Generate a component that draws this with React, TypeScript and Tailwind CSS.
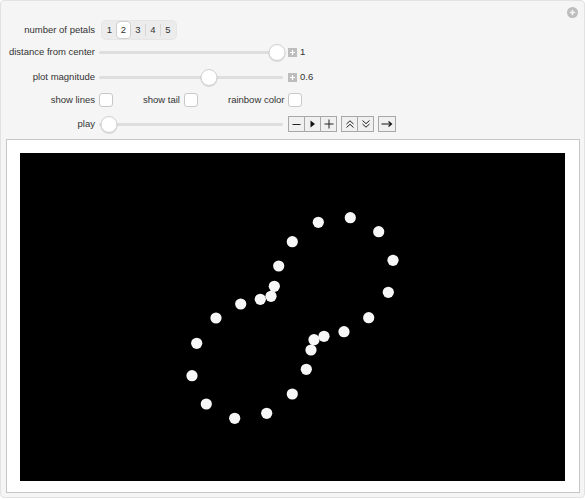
import React from 'react';

const dots: [number, number][] = [
  [318.3, 222.3], [350.3, 217.7], [378.7, 231.7], [393, 260.3], [388.3, 292.3],
  [368.7, 317.7], [344, 331.7], [324, 336.3], [314, 339.7], [311, 350],
  [306.3, 369.3], [292.3, 394], [266.7, 413.3], [234.7, 418.3], [206.3, 404],
  [192, 375.7], [196.7, 343.3], [216, 318], [240.7, 304], [260.3, 299.3],
  [271, 296.3], [274.3, 286.3], [278.7, 266], [292.3, 241.7],
];

function Label({ children }: { children: React.ReactNode }) {
  return <div className="w-[98px] shrink-0 pr-[4px] text-right">{children}</div>;
}

function Slider({ pos }: { pos: number }) {
  return (
    <div className="relative h-[20px] w-[184px] shrink-0">
      <div className="absolute left-0 right-0 top-[9px] h-[3px] rounded-full bg-[#dedede]" />
      <div
        className="absolute top-[2px] h-[17px] w-[17px] -translate-x-1/2 rounded-full border border-[#d0d0d0] bg-white shadow-[0_1px_1px_rgba(0,0,0,0.12)]"
        style={{ left: pos }}
      />
    </div>
  );
}

function PlusBox() {
  return (
    <div className="flex h-[9px] w-[9px] items-center justify-center bg-[#bdbdbd]">
      <svg width="7" height="7" viewBox="0 0 7 7">
        <path d="M3.5 1v5M1 3.5h5" stroke="white" strokeWidth="1.2" />
      </svg>
    </div>
  );
}

function Check() {
  return <div className="h-[14px] w-[14px] rounded-[3px] border border-[#c8c8c8] bg-white" />;
}

function Btn({ children, w = 'w-[17px]' }: { children: React.ReactNode; w?: string }) {
  return (
    <div className={`flex h-[16px] ${w} items-center justify-center border border-[#a8a8a8] bg-[#f0f0f0] -ml-px first:ml-0`}>
      {children}
    </div>
  );
}

export default function App() {
  return (
    <div className="h-[499px] w-[585px] bg-white font-['Liberation_Sans',Arial,sans-serif] text-[9.5px] text-[#333]">
      <div className="relative h-[498px] w-[585px] rounded-[4px] border border-[#e2e2e2] bg-[#f5f5f5]">
        <div className="absolute right-[6px] top-[6px]">
          <svg width="11" height="11" viewBox="0 0 11 11">
            <circle cx="5.5" cy="5.5" r="5.5" fill="#bdbdbd" />
            <path d="M5.5 2.8v5.4M2.8 5.5h5.4" stroke="#f5f5f5" strokeWidth="1.6" />
          </svg>
        </div>

        <div className="flex flex-col pt-[19px]">
          <div className="flex h-[20px] items-center">
            <Label>number of petals</Label>
            <div className="ml-[2px] flex h-[20px] items-center rounded-[5px] border border-[#e6e6e6] bg-[#ececec] px-[1px]">
              <div className="w-[13px] text-center">1</div>
              <div className="flex h-[18px] w-[15px] items-center justify-center rounded-[4px] border border-[#cfcfcf] bg-white">2</div>
              <div className="w-[14px] text-center">3</div>
              <div className="h-[12px] w-px bg-[#d6d6d6]" />
              <div className="w-[14px] text-center">4</div>
              <div className="h-[12px] w-px bg-[#d6d6d6]" />
              <div className="w-[14px] text-center">5</div>
            </div>
          </div>

          <div className="mt-[2px] flex h-[20px] items-center">
            <Label>distance from center</Label>
            <Slider pos={178} />
            <div className="ml-[5px] flex items-center gap-[3px]">
              <PlusBox />
              <span>1</span>
            </div>
          </div>

          <div className="mt-[5px] flex h-[20px] items-center">
            <Label>plot magnitude</Label>
            <Slider pos={110} />
            <div className="ml-[5px] flex items-center gap-[3px]">
              <PlusBox />
              <span>0.6</span>
            </div>
          </div>

          <div className="mt-[3px] flex h-[20px] items-center">
            <Label>show lines</Label>
            <Check />
            <div className="ml-[30px] pr-[4px]">show tail</div>
            <Check />
            <div className="ml-[30px] pr-[4px]">rainbow color</div>
            <Check />
          </div>

          <div className="mt-[4px] flex h-[20px] items-center">
            <Label>play</Label>
            <Slider pos={10} />
            <div className="ml-[5px] flex">
              <Btn>
                <svg width="9" height="9" viewBox="0 0 9 9"><path d="M0.5 4.5h8" stroke="#222" strokeWidth="1" /></svg>
              </Btn>
              <Btn>
                <svg width="7" height="8" viewBox="0 0 7 8"><path d="M1.5 0.5L6 4L1.5 7.5Z" fill="#111" /></svg>
              </Btn>
              <Btn>
                <svg width="10" height="10" viewBox="0 0 10 10"><path d="M5 0.5v9M0.5 5h9" stroke="#222" strokeWidth="1" /></svg>
              </Btn>
            </div>
            <div className="ml-[4px] flex">
              <Btn>
                <svg width="10" height="10" viewBox="0 0 10 10"><path d="M1.5 5L5 1.8L8.5 5M1.5 8.5L5 5.3L8.5 8.5" fill="none" stroke="#222" strokeWidth="1" /></svg>
              </Btn>
              <Btn>
                <svg width="10" height="10" viewBox="0 0 10 10"><path d="M1.5 1.5L5 4.7L8.5 1.5M1.5 5L5 8.2L8.5 5" fill="none" stroke="#222" strokeWidth="1" /></svg>
              </Btn>
            </div>
            <div className="ml-[4px] flex">
              <Btn w="w-[18px]">
                <svg width="12" height="8" viewBox="0 0 12 8"><path d="M0.5 4h10M7.5 1.5L10.5 4L7.5 6.5" fill="none" stroke="#111" strokeWidth="1.2" /></svg>
              </Btn>
            </div>
          </div>
        </div>

        <div className="ml-[5px] mt-[5px] h-[354px] w-[574px] border border-[#c6c6c6] bg-white p-[13px]">
          <div className="h-[328px] w-[545px] bg-black">
            <svg width="545" height="328" viewBox="0 0 545 328">
              {dots.map(([x, y], i) => (
                <circle key={i} cx={x - 20} cy={y - 153} r="5.6" fill="#f7f7f7" />
              ))}
            </svg>
          </div>
        </div>
      </div>
    </div>
  );
}
